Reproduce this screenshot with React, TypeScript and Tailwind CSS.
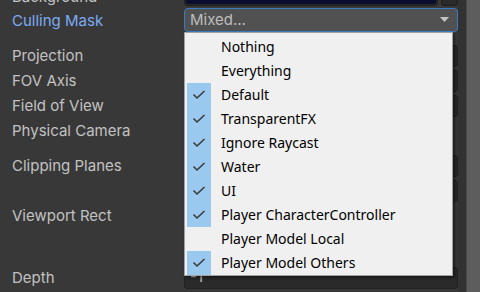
const layers = [
  { name: 'Nothing', checked: false },
  { name: 'Everything', checked: false },
  { name: 'Default', checked: true },
  { name: 'TransparentFX', checked: true },
  { name: 'Ignore Raycast', checked: true },
  { name: 'Water', checked: true },
  { name: 'UI', checked: true },
  { name: 'Player CharacterController', checked: true },
  { name: 'Player Model Local', checked: false },
  { name: 'Player Model Others', checked: true },
];

const labelFont = { fontFamily: 'Inter, "Noto Sans", sans-serif' };

function Label({ children, active }: { children?: React.ReactNode; active?: boolean }) {
  return (
    <div
      className={`w-[184px] shrink-0 pl-3 text-[15px] leading-none ${active ? 'text-[#7cabf2]' : 'text-[#c2c2c2]'}`}
      style={labelFont}
    >
      {children}
    </div>
  );
}

function Field({ children }: { children?: React.ReactNode }) {
  return (
    <div
      className="flex-1 h-[22px] rounded-[3px] bg-[#2a2a2a] border border-[#212121] flex items-center pl-[5px] text-[15px] text-[#c2c2c2]"
      style={labelFont}
    >
      {children}
    </div>
  );
}

function Check() {
  return (
    <svg width="14" height="10" viewBox="0 0 14 10" fill="none">
      <polyline points="1.5,4.5 5,8 12.5,1" stroke="#3b3b3b" strokeWidth="1.6" />
    </svg>
  );
}

export default function App() {
  return (
    <div className="relative w-[480px] h-[292px] overflow-hidden bg-[#383838] flex">
      <div className="flex-1 flex flex-col -mt-[14px]">
        {/* Background */}
        <div className="flex items-center h-[20px]">
          <Label>Background</Label>
          <div className="flex-1 flex gap-[3px] h-[20px]">
            <div className="flex-1 rounded-[3px] bg-[#2a2a2a] border border-[#1e1e1e] p-[1px]">
              <div className="h-full bg-[#0b0c2e] rounded-[2px]" />
            </div>
            <div className="w-[17px] rounded-[3px] bg-[#2a2a2a] border border-[#1e1e1e]" />
          </div>
        </div>

        {/* Culling Mask */}
        <div className="flex items-center h-[24px] mt-[2px]">
          <Label active>Culling Mask</Label>
          <div
            className="flex-1 h-[24px] rounded-[4px] bg-[#515151] border border-[#3a7ac6] flex items-center justify-between pl-[5px] pr-[8px] text-[15px] text-[#bdbdbd]"
            style={labelFont}
          >
            <span>Mixed...</span>
            <svg width="9" height="6" viewBox="0 0 9 6">
              <polygon points="0,0 9,0 4.5,5" fill="#c4c4c4" />
            </svg>
          </div>
        </div>

        {/* Projection */}
        <div className="flex items-center h-[25px] mt-[11px]">
          <Label>Projection</Label>
          <Field />
        </div>
        <div className="flex items-center h-[25px]">
          <Label>FOV Axis</Label>
          <Field />
        </div>
        <div className="flex items-center h-[25px]">
          <Label>Field of View</Label>
          <Field />
        </div>
        <div className="flex items-center h-[25px]">
          <Label>Physical Camera</Label>
          <div className="w-[16px] h-[16px] rounded-[3px] bg-[#2a2a2a] border border-[#212121] ml-[2px]" />
        </div>

        {/* Clipping Planes */}
        <div className="flex flex-col mt-[10px]">
          <div className="flex items-center h-[25px]">
            <Label>Clipping Planes</Label>
            <Field />
          </div>
          <div className="flex items-center h-[25px]">
            <Label />
            <Field />
          </div>
        </div>

        {/* Viewport Rect */}
        <div className="flex flex-col">
          <div className="flex items-center h-[25px]">
            <Label>Viewport Rect</Label>
            <div className="flex-1 flex gap-2 pr-[10px]">
              <Field />
              <Field />
            </div>
          </div>
          <div className="flex items-center h-[25px]">
            <Label />
            <div className="flex-1 flex gap-2 pr-[10px]">
              <Field />
              <Field />
            </div>
          </div>
        </div>

        {/* Depth */}
        <div className="flex items-center h-[25px] mt-[12px]">
          <Label>Depth</Label>
          <Field>-1</Field>
        </div>
      </div>

      {/* scrollbar */}
      <div className="w-[8px] bg-[#323232]" />
      <div className="w-[14px] bg-[#5d5d5d] border-l border-[#4a4a4a]" />

      {/* dropdown menu */}
      <div
        className="absolute left-[184px] top-[32px] w-[269px] h-[244px] bg-[#f0f0f0] border border-[#a0a0a0] shadow-[2px_2px_3px_rgba(0,0,0,0.45)] pt-[2px] pl-[2px]"
        style={{ fontFamily: '"Noto Sans", "Open Sans", sans-serif' }}
      >
        {layers.map((layer) => (
          <div key={layer.name} className="flex items-center h-[24px]">
            <div
              className={`w-[24px] h-[24px] flex items-center justify-center ${layer.checked ? 'bg-[#99c9ef]' : ''}`}
            >
              {layer.checked && <Check />}
            </div>
            <span className="ml-[10px] text-[14px] text-black leading-none">{layer.name}</span>
          </div>
        ))}
      </div>
    </div>
  );
}
